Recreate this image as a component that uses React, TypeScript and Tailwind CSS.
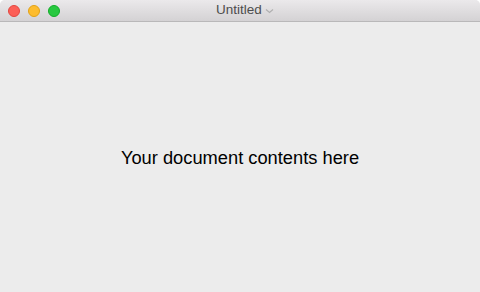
export default function App() {
  return (
    <div className="flex h-[292px] w-[480px] flex-col overflow-hidden rounded-t-[5px] bg-[#ececec] font-['Liberation_Sans',Arial,sans-serif]">
      <div className="relative flex h-[22px] shrink-0 items-center justify-center border-b border-[#b9b8b9] bg-gradient-to-b from-[#ebe9eb] to-[#d4d2d4]">
        <div className="absolute left-[8px] top-[5px] flex gap-[8px]">
          <span className="h-[12px] w-[12px] rounded-full border border-[#e2463f] bg-[#fc5f57]" />
          <span className="h-[12px] w-[12px] rounded-full border border-[#e1a116] bg-[#fdbc2e]" />
          <span className="h-[12px] w-[12px] rounded-full border border-[#12ac28] bg-[#28c840]" />
        </div>
        <div className="flex items-center gap-[3px] pl-[10px] text-[13.5px] text-[#4d4d4d]">
          <span>Untitled</span>
          <svg width="9" height="6" viewBox="0 0 9 6">
            <path d="M1 1.5 L4.5 4.5 L8 1.5" fill="none" stroke="#b0b0b0" strokeWidth="1.2" />
          </svg>
        </div>
      </div>
      <div className="flex flex-1 items-center justify-center pt-[1px]">
        <p className="text-[18.3px] text-black">Your document contents here</p>
      </div>
    </div>
  )
}
